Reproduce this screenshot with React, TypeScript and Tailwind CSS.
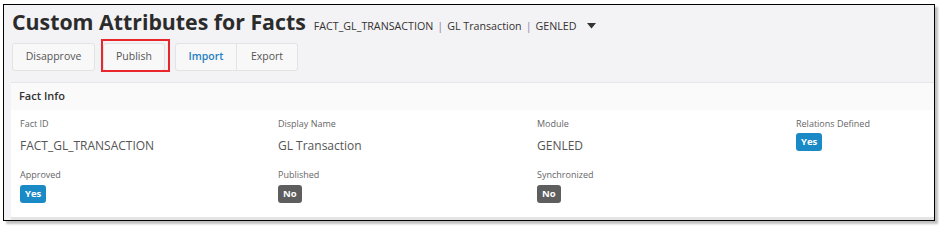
import { ReactNode } from 'react'

const font = { fontFamily: '"Open Sans", "Noto Sans", sans-serif' }

function Badge({ tone, children }: { tone: 'yes' | 'no'; children: ReactNode }) {
  return (
    <span
      className={
        'inline-flex h-[18px] items-center rounded-[3px] px-[5px] text-[9.5px] font-bold leading-none text-white ' +
        (tone === 'yes' ? 'bg-[#1a8ac6]' : 'bg-[#5e5e5e]')
      }
    >
      {children}
    </span>
  )
}

function Field({ label, children }: { label: string; children: ReactNode }) {
  return (
    <div className="flex flex-col">
      <div className="text-[9px] leading-[12px] text-[#666]">{label}</div>
      {children}
    </div>
  )
}

function Value({ children }: { children: ReactNode }) {
  return <div className="mt-[7px] text-[12px] leading-[17px] text-[#555]">{children}</div>
}

export default function App() {
  return (
    <div className="h-[226px] w-[940px] bg-white" style={font}>
      <div className="ml-[3px] pt-[4px]">
        <div className="flex h-[217px] w-[932px] flex-col border-[1.5px] border-black bg-[#f3f2f5] shadow-[3px_3px_2px_rgba(0,0,0,0.25)]">
          <div className="flex items-baseline gap-[8px] pl-[8px] pt-[3px]">
            <h1 className="text-[21.3px] font-bold leading-[28px] text-[#2b2b2b]">Custom Attributes for Facts</h1>
            <div className="flex items-center text-[10.7px] text-[#333]">
              <span>FACT_GL_TRANSACTION</span>
              <span className="mx-[4px] text-[#8a84ad]">|</span>
              <span>GL Transaction</span>
              <span className="mx-[4px] text-[#8a84ad]">|</span>
              <span>GENLED</span>
              <svg className="ml-[10px]" width="9" height="6" viewBox="0 0 9 6">
                <path d="M0 0 H9 L4.5 5.5 Z" fill="#333" />
              </svg>
            </div>
          </div>
          <div className="mt-[7px] flex items-center pl-[8px] text-[10.5px] text-[#555]">
            <button className="h-[28px] w-[83px] rounded-[3px] border border-[#e3e3e3] bg-[#f8f8f8]">Disapprove</button>
            <button className="relative ml-[8px] h-[28px] w-[62px] rounded-[3px] border border-[#e3e3e3] bg-[#f8f8f8]">
              Publish
              <span className="absolute -bottom-[2px] -left-[3px] -right-[6px] -top-[5px] border-2 border-[#e8262b]" />
            </button>
            <div className="ml-[10px] flex h-[28px] rounded-[3px] border border-[#e3e3e3] bg-[#f8f8f8]">
              <button className="w-[61px] border-r border-[#e3e3e3] font-semibold text-[#1f7ec4]">Import</button>
              <button className="w-[60px]">Export</button>
            </div>
          </div>
          <div className="ml-[7px] mt-[11px] flex flex-1 flex-col border-t border-[#e6e5e8] bg-white">
            <div className="flex h-[27px] items-center bg-[#fafafa] pl-[8px] text-[11px] font-semibold text-[#333]">
              Fact Info
            </div>
            <div className="grid grid-cols-[258px_259px_259px_1fr] gap-y-[14.5px] pl-[9px] pt-[8px]">
              <Field label="Fact ID">
                <Value>FACT_GL_TRANSACTION</Value>
              </Field>
              <Field label="Display Name">
                <Value>GL Transaction</Value>
              </Field>
              <Field label="Module">
                <Value>GENLED</Value>
              </Field>
              <Field label="Relations Defined">
                <div className="mt-[3px] flex">
                  <Badge tone="yes">Yes</Badge>
                </div>
              </Field>
              <Field label="Approved">
                <div className="mt-[4px] flex">
                  <Badge tone="yes">Yes</Badge>
                </div>
              </Field>
              <Field label="Published">
                <div className="mt-[4px] flex">
                  <Badge tone="no">No</Badge>
                </div>
              </Field>
              <Field label="Synchronized">
                <div className="mt-[4px] flex">
                  <Badge tone="no">No</Badge>
                </div>
              </Field>
            </div>
          </div>
          <div className="ml-[7px] h-[3px] bg-[#e4e4e4]" />
        </div>
      </div>
    </div>
  )
}
